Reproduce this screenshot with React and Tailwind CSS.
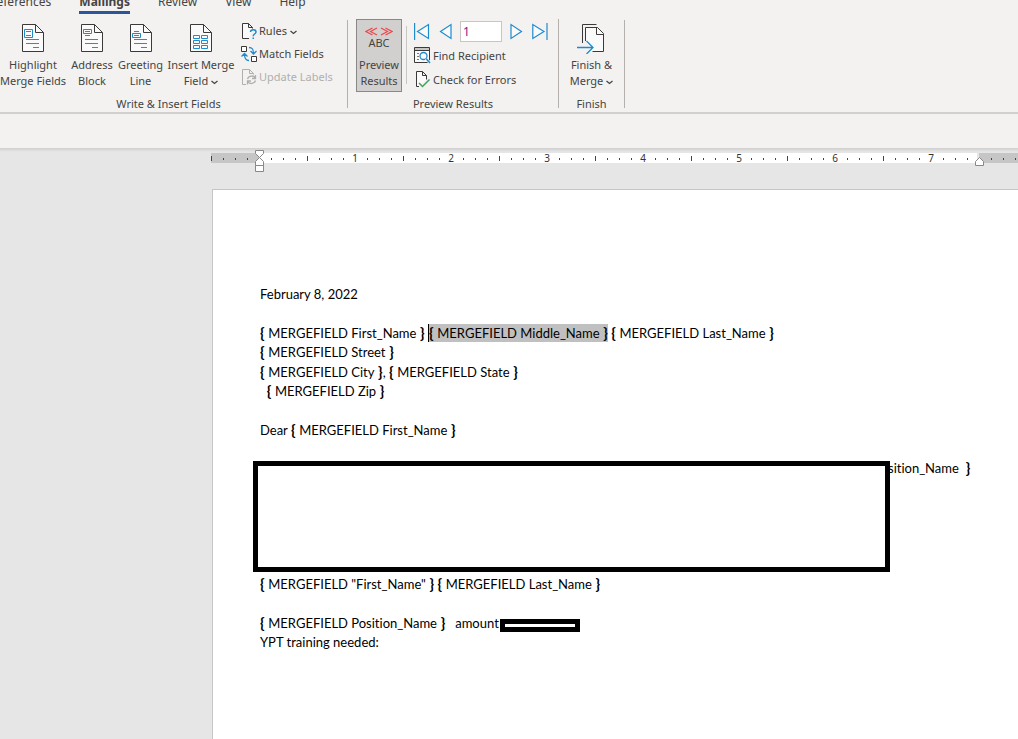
import React from 'react';

const tabs = ['References', 'Mailings', 'Review', 'View', 'Help'];

function PageOutline() {
  return (
    <>
      <path d="M.5.5h13l8 8v19H.5z" fill="#fafafa" stroke="#3b3a39" />
      <path d="M13.5.5v8h8" fill="none" stroke="#3b3a39" />
    </>
  );
}

function HighlightIcon() {
  return (
    <svg width="22" height="28" viewBox="0 0 22 28" aria-hidden="true">
      <PageOutline />
      <path d="M2.5 5.5h8v8h-8z" fill="#fafafa" stroke="#1e8bcd" />
      <path d="M4 7.5h5M4 11.5h5M4 15.5h13M4 19.5h13M11 23.5h6" stroke="#797775" />
    </svg>
  );
}

function AddressIcon() {
  return (
    <svg width="22" height="28" viewBox="0 0 22 28" aria-hidden="true">
      <PageOutline />
      <path d="M2.5 5.5h8v4h-8z" fill="#fafafa" stroke="#1e8bcd" />
      <path d="M4 7.5h5M4 11.5h5M4 15.5h13M4 19.5h13M11 23.5h6" stroke="#797775" />
    </svg>
  );
}

function GreetingIcon() {
  return (
    <svg width="22" height="28" viewBox="0 0 22 28" aria-hidden="true">
      <PageOutline />
      <path d="M2.5 9.5h8v4h-8z" fill="#fafafa" stroke="#1e8bcd" />
      <path d="M4 7.5h5M4 11.5h5M4 15.5h13M4 19.5h13M11 23.5h6" stroke="#797775" />
    </svg>
  );
}

function InsertFieldIcon() {
  return (
    <svg width="22" height="28" viewBox="0 0 22 28" aria-hidden="true">
      <PageOutline />
      <path
        d="M3.5 11.5h6v3h-6zM11.5 11.5h6v3h-6zM3.5 16.5h6v3h-6zM11.5 16.5h6v3h-6zM3.5 21.5h6v3h-6zM11.5 21.5h6v3h-6z"
        fill="none"
        stroke="#1e8bcd"
      />
    </svg>
  );
}

function RulesIcon() {
  return (
    <svg width="16" height="16" viewBox="0 0 16 16" aria-hidden="true">
      <path d="M8 15.500H1.500V.5h6l4 4v1M7.500.5v4h4" fill="#fafafa" stroke="#3b3a39" />
      <path d="M9.500 9c0-3 5.500-3 5.500 0 0 2-2.800 2-2.800 4.200" fill="none" stroke="#1e8bcd" strokeWidth="1.500" />
      <path d="M11.500 14.500H13V16h-1.500z" fill="#1e8bcd" />
    </svg>
  );
}

function MatchIcon() {
  return (
    <svg width="16" height="16" viewBox="0 0 16 16" aria-hidden="true">
      <path d="M.5.5h5v5h-5zM10.500 10.500h5v5h-5z" fill="#fff" stroke="#3b3a39" />
      <path d="M8 1.500c3.500 0 4.500 1.500 4.500 6M9.500 5l3 3 3-3M8 14.500c-3.500 0-4.500-2-4.500-6M.5 10.500l3-3 3 3" fill="none" stroke="#1e8bcd" strokeWidth="1.300" />
    </svg>
  );
}

function UpdateIcon() {
  return (
    <svg width="16" height="16" viewBox="0 0 16 16" aria-hidden="true">
      <path d="M5 15.500H1.500V.5h7l4 4v1M8.500.5v4h4" fill="none" stroke="#b1afad" />
      <path d="M6.500 10c1-3.500 6-4 8-1M14.500 6v3.500H11M14.500 11.500c-1 3.500-6 4-8 1M6.500 15.500v-3.500H10" fill="none" stroke="#b1afad" strokeWidth="1.300" />
    </svg>
  );
}

function FindIcon() {
  return (
    <svg width="17" height="17" viewBox="0 0 17 17" aria-hidden="true">
      <path d="M.5.5h15v15H.5z" fill="#fafafa" stroke="#3b3a39" />
      <path d="M1 1h14v2H1z" fill="#c8c6c4" />
      <path d="M0 3.500h16" stroke="#3b3a39" />
      <path d="M3 6.500h2M3 9.500h2M3 12.500h2" stroke="#797775" />
      <circle cx="9.500" cy="9" r="3.500" fill="#fafafa" stroke="#1e8bcd" strokeWidth="1.300" />
      <path d="M12 11.500l4 4.500" stroke="#f3f2f1" strokeWidth="3" />
      <path d="M12 11.500l4 4.500" stroke="#1e8bcd" strokeWidth="1.500" />
    </svg>
  );
}

function CheckIcon() {
  return (
    <svg width="17" height="17" viewBox="0 0 17 17" aria-hidden="true">
      <path d="M5 15.500H2.500V.5h6l4 4v4M8.500.5v4h4" fill="#fafafa" stroke="#3b3a39" />
      <path d="M5 12l3.500 3.500L15.500 8.500" fill="none" stroke="#3fa45b" strokeWidth="1.500" />
    </svg>
  );
}

function FinishIcon() {
  return (
    <svg width="34" height="30" viewBox="0 0 34 30" aria-hidden="true">
      <path d="M7.500 19V.5h14" fill="none" stroke="#3b3a39" />
      <path d="M10.500 17V3.500h12l6 6v18h-11" fill="#fafafa" stroke="#3b3a39" />
      <path d="M21.500 3.500v7h7" fill="none" stroke="#3b3a39" />
      <path d="M2 23.500h15.500M11.500 17l6.500 6.500-6.500 6.500" fill="none" stroke="#1e8bcd" strokeWidth="1.300" />
    </svg>
  );
}

function Chevrons() {
  return (
    <svg width="28" height="9" viewBox="0 0 28 9" aria-hidden="true">
      <path d="M7.500 1L1 4.500 7.500 8M12 1L5.500 4.500 12 8M16 1l6.500 3.500L16 8M20.500 1L27 4.500 20.500 8" fill="none" stroke="#e8484d" strokeWidth="1.200" />
    </svg>
  );
}

function DownArrow() {
  return (
    <svg className="ml-[3px] inline-block" width="7" height="5" viewBox="0 0 7 5" aria-hidden="true">
      <path d="M.5 1l3 2.500L6.500 1" fill="none" stroke="#444" strokeWidth="1.300" />
    </svg>
  );
}

function NavButton({ label, path, width }) {
  return (
    <button type="button" aria-label={label}>
      <svg width={width} height="17" viewBox={`0 0 ${width} 17`}>
        <path d={path} fill="#fafafa" stroke="#1e8bcd" strokeWidth="1.200" />
      </svg>
    </button>
  );
}

function LargeButton({ icon, top, bottom, menu, className }) {
  return (
    <button type="button" className={`flex flex-col items-center whitespace-nowrap leading-4 ${className}`}>
      <span className="mb-1 flex h-[29px] items-start">{icon}</span>
      <span>{top}</span>
      <span>
        {bottom}
        {menu && <DownArrow />}
      </span>
    </button>
  );
}

function SmallButton({ icon, label, menu, disabled }) {
  return (
    <button type="button" disabled={disabled} className="flex items-center gap-0.5 whitespace-nowrap disabled:text-[#b1afad]">
      {icon}
      <span>
        {label}
        {menu && <DownArrow />}
      </span>
    </button>
  );
}

function Ribbon() {
  return (
    <header className="border-b-2 border-[#d2d0ce] bg-[#f3f2f1] font-['Noto_Sans',sans-serif] text-[11px] text-[#444444]">
      <nav className="-ml-[11px] flex h-[14px] items-end gap-7 overflow-hidden text-[12px] leading-[18px]">
        {tabs.map((tab) => (
          <a
            key={tab}
            href="#"
            className={tab === 'Mailings' ? 'border-b-3 border-[#2b579a] font-bold' : 'pb-[3px]'}
          >
            {tab}
          </a>
        ))}
      </nav>

      <div className="mt-[5px] flex h-[93px] items-start">
        {/* Write & Insert Fields */}
        <section className="mt-px flex h-[88px] w-[348px] shrink-0 flex-col justify-between border-r border-[#b3b0ad]">
          <div className="flex">
            <div className="flex gap-[5px] pt-1">
              <LargeButton className="w-[66px]" icon={<HighlightIcon />} top="Highlight" bottom="Merge Fields" />
              <LargeButton className="w-[42px]" icon={<AddressIcon />} top="Address" bottom="Block" />
              <LargeButton className="w-[45px]" icon={<GreetingIcon />} top="Greeting" bottom="Line" />
              <LargeButton className="w-[66px]" icon={<InsertFieldIcon />} top="Insert Merge" bottom="Field" menu />
            </div>
            <div className="ml-[7px] flex flex-col gap-[7px] pt-[3px] leading-4">
              <SmallButton icon={<RulesIcon />} label="Rules" menu />
              <SmallButton icon={<MatchIcon />} label="Match Fields" />
              <SmallButton icon={<UpdateIcon />} label="Update Labels" disabled />
            </div>
          </div>
          <h2 className="pr-2.5 text-center leading-2">Write &amp; Insert Fields</h2>
        </section>

        {/* Preview Results */}
        <section className="flex h-[89px] w-[211px] shrink-0 flex-col justify-between border-r border-[#b3b0ad]">
          <div className="flex">
            <button type="button" className="ml-2 flex h-[73px] w-[46px] flex-col items-center border border-[#8a8886] bg-[#d2d0ce] pt-[7px] leading-4">
              <Chevrons />
              <span className="mb-[7px] leading-[14px]">ABC</span>
              <span>Preview</span>
              <span>Results</span>
            </button>
            <div className="mt-[7px] ml-1 h-[58px] w-px bg-[#c8c6c4]"></div>
            <div className="ml-[7px] flex flex-col pt-0.5">
              <div className="mb-[5px] flex h-[21px] items-center">
                <NavButton label="First record" width={16} path="M.6 0v17M14.500 1.500v14L3.500 8.500z" />
                <span className="w-[9px]"></span>
                <NavButton label="Previous record" width={13} path="M12 1.500v14L1.500 8.500z" />
                <input
                  aria-label="Record number"
                  defaultValue="1"
                  className="mx-2 h-[21px] w-[42px] border border-[#c8c6c4] bg-white px-0.5 text-[12px] text-[#80208a]"
                />
                <NavButton label="Next record" width={13} path="M1 1.500v14L11.500 8.500z" />
                <span className="w-[9px]"></span>
                <NavButton label="Last record" width={16} path="M15 0v17M.8 1.500v14L12 8.500z" />
              </div>
              <div className="flex flex-col gap-[7px] leading-4">
                <SmallButton icon={<FindIcon />} label="Find Recipient" />
                <SmallButton icon={<CheckIcon />} label="Check for Errors" />
              </div>
            </div>
          </div>
          <h2 className="text-center leading-2">Preview Results</h2>
        </section>

        {/* Finish */}
        <section className="mt-px flex h-[88px] w-[66px] shrink-0 flex-col items-center justify-between border-r border-[#b3b0ad]">
          <div className="pt-1">
            <LargeButton className="w-[46px]" icon={<FinishIcon />} top="Finish &amp;" bottom="Merge" menu />
          </div>
          <h2 className="leading-2">Finish</h2>
        </section>
      </div>
    </header>
  );
}

// One cell per eighth of an inch, counted from the left margin
function RulerCells({ count, margin }) {
  return Array.from({ length: count }, (_, i) => {
    if (!margin && i > 0 && i % 8 === 0) {
      return (
        <span key={i} className="w-3 shrink-0">
          <span className="-ml-1.5 block w-3 text-center">{i / 8}</span>
        </span>
      );
    }
    const tall = margin === 'left' ? i === 0 : i % 8 === 4;
    return (
      <span key={i} className="flex h-full w-3 shrink-0 items-center pt-px">
        <span className={tall ? 'h-[5px] w-px bg-[#444444]' : 'h-0.5 w-px bg-[#444444]'}></span>
      </span>
    );
  });
}

function Ruler() {
  return (
    <div className="relative ml-[211px] flex h-[10px] font-['Noto_Sans',sans-serif] text-[10px] leading-[11px] text-[#333333]">
      <div className="flex w-12 shrink-0 overflow-hidden bg-[#c6c6c6]">
        <RulerCells count={4} margin="left" />
      </div>
      <div className="mr-0.5 flex w-[718px] shrink-0 overflow-hidden bg-white">
        <RulerCells count={60} />
      </div>
      <div className="flex min-w-0 flex-1 overflow-hidden bg-[#c6c6c6]">
        <RulerCells count={160} margin="right" />
      </div>
      <svg className="absolute -top-[3px] left-11" width="9" height="22" viewBox="0 0 9 22" aria-hidden="true">
        <path d="M.5.5h8v3l-4 4-4-4zM.5 15.500v-4l4-4 4 4v4zM.5 15.500h8v6h-8z" fill="#fff" stroke="#8a8886" />
      </svg>
      <svg className="absolute top-1 left-[764px]" width="9" height="9" viewBox="0 0 9 9" aria-hidden="true">
        <path d="M.5 8.500v-4l4-4 4 4v4z" fill="#fff" stroke="#8a8886" />
      </svg>
    </div>
  );
}

function Field({ name }) {
  return (
    <span>
      <b className="text-[15px] leading-none">{'{ '}</b>
      MERGEFIELD {name}
      <b className="text-[15px] leading-none">{' }'}</b>
    </span>
  );
}

function Letter() {
  return (
    <main className="ml-[212px] min-h-[550px] flex-1 overflow-hidden border-t border-l border-[#c6c6c6] bg-white pt-[95px] pl-[47px] font-['Lato',sans-serif] text-[13px] leading-[19px] whitespace-pre text-black [font-variant-ligatures:none]">
      <p className="mb-5">February 8, 2022</p>
      <div className="mb-5">
        <p>
          <Field name="First_Name" />{' '}
          <mark className="border-l border-black bg-[#c0c0c0] py-px text-black">
            <Field name="Middle_Name" />
          </mark>{' '}
          <Field name="Last_Name" />
        </p>
        <p>
          <Field name="Street" />
        </p>
        <p className="leading-5">
          <Field name="City" />, <Field name="State" />
        </p>
        <p>
          {'  '}
          <Field name="Zip" />
        </p>
      </div>
      <p className="mb-[19px]">
        Dear <Field name="First_Name" />
      </p>
      <div className="relative h-[116px]">
        <p className="pl-[628px]">
          {'sition_Name '}
          <b className="text-[15px] leading-none">{' }'}</b>
        </p>
        <div className="absolute -left-[7px] top-0.5 h-[111px] w-[637px] border-5 border-black bg-white"></div>
      </div>
      <p className="mb-5">
        <Field name={'"First_Name"'} /> <Field name="Last_Name" />
      </p>
      <p className="relative">
        <Field name="Position_Name" />
        {'   amount'}
        <span className="absolute top-[5px] left-60 h-[13px] w-20 border-5 border-black bg-white"></span>
      </p>
      <p>YPT training needed:</p>
    </main>
  );
}

export default function App() {
  return (
    <div className="flex min-h-screen flex-col overflow-hidden bg-[#e6e6e6]">
      <Ribbon />
      <div className="h-[34px] bg-[#f3f2f1]"></div>
      <div className="mb-px h-1 bg-linear-to-b from-[#cfcfcf] to-[#e6e6e6]"></div>
      <Ruler />
      <div className="h-[26px]"></div>
      <Letter />
    </div>
  );
}
